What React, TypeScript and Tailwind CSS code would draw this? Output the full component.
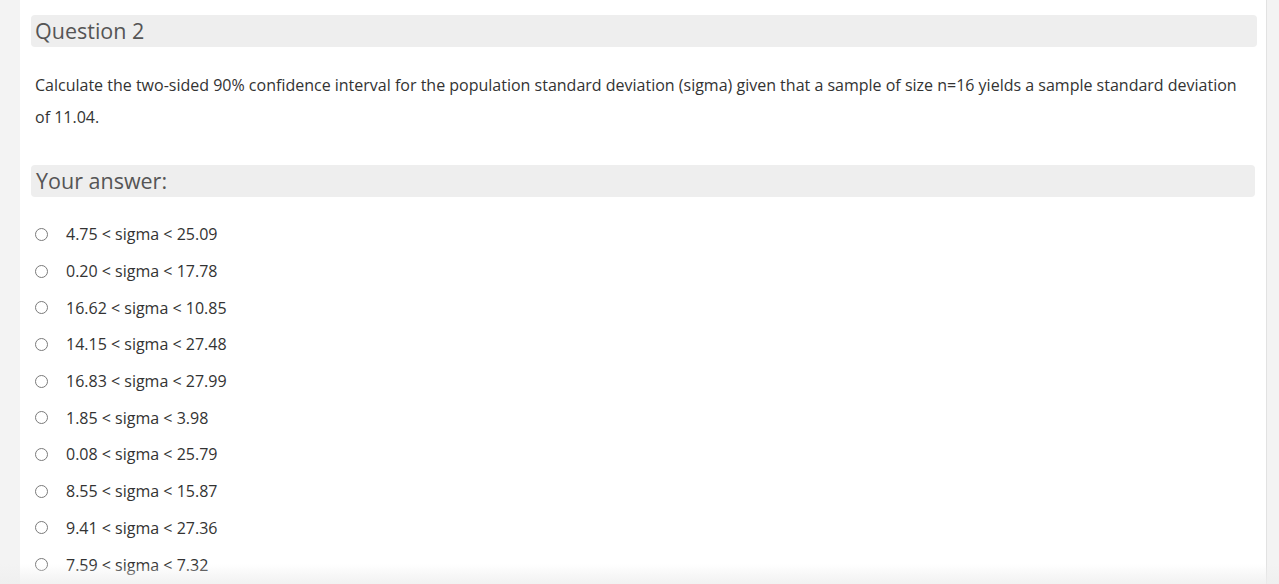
import React from "react";

const options = [
  "4.75 < sigma < 25.09",
  "0.20 < sigma < 17.78",
  "16.62 < sigma < 10.85",
  "14.15 < sigma < 27.48",
  "16.83 < sigma < 27.99",
  "1.85 < sigma < 3.98",
  "0.08 < sigma < 25.79",
  "8.55 < sigma < 15.87",
  "9.41 < sigma < 27.36",
  "7.59 < sigma < 7.32",
];

export default function App() {
  return (
    <div
      className="relative flex h-[584px] w-[1279px] overflow-hidden bg-[#f3f3f3] pl-[20px]"
      style={{ fontFamily: '"Open Sans", "Noto Sans", sans-serif' }}
    >
      <div className="w-[1247px] shrink-0 border-r border-[#e2e2e2] bg-white pl-[11px] pr-[9px] pt-[15px]">
        <div className="flex h-[32px] items-center rounded-[4px] bg-[#eeeeee] pl-[4px] text-[21.5px] text-[#555555]">
          Question 2
        </div>
        <p className="mt-[22px] pl-[4px] pr-[14px] text-[16px] leading-[32px] text-[#333333]">
          Calculate the two-sided 90% confidence interval for the population standard deviation (sigma) given that a sample of size n=16 yields a sample standard deviation of 11.04.
        </p>
        <div className="mr-[2px] mt-[32px] flex h-[32px] items-center rounded-[4px] bg-[#eeeeee] pl-[5px] text-[21.5px] text-[#555555]">
          Your answer:
        </div>
        <div className="mt-[19px] flex flex-col">
          {options.map((o) => (
            <div key={o} className="flex h-[36.7px] items-center">
              <span className="ml-[4px] h-[13px] w-[13px] shrink-0 rounded-full border border-[#7a7a7a] bg-white" />
              <span className="ml-[18px] text-[16px] text-[#333333]">{o}</span>
            </div>
          ))}
        </div>
      </div>
      <div className="pointer-events-none absolute bottom-0 left-0 right-0 h-[20px] bg-gradient-to-b from-transparent to-[#eeeeee]/80" />
    </div>
  );
}
